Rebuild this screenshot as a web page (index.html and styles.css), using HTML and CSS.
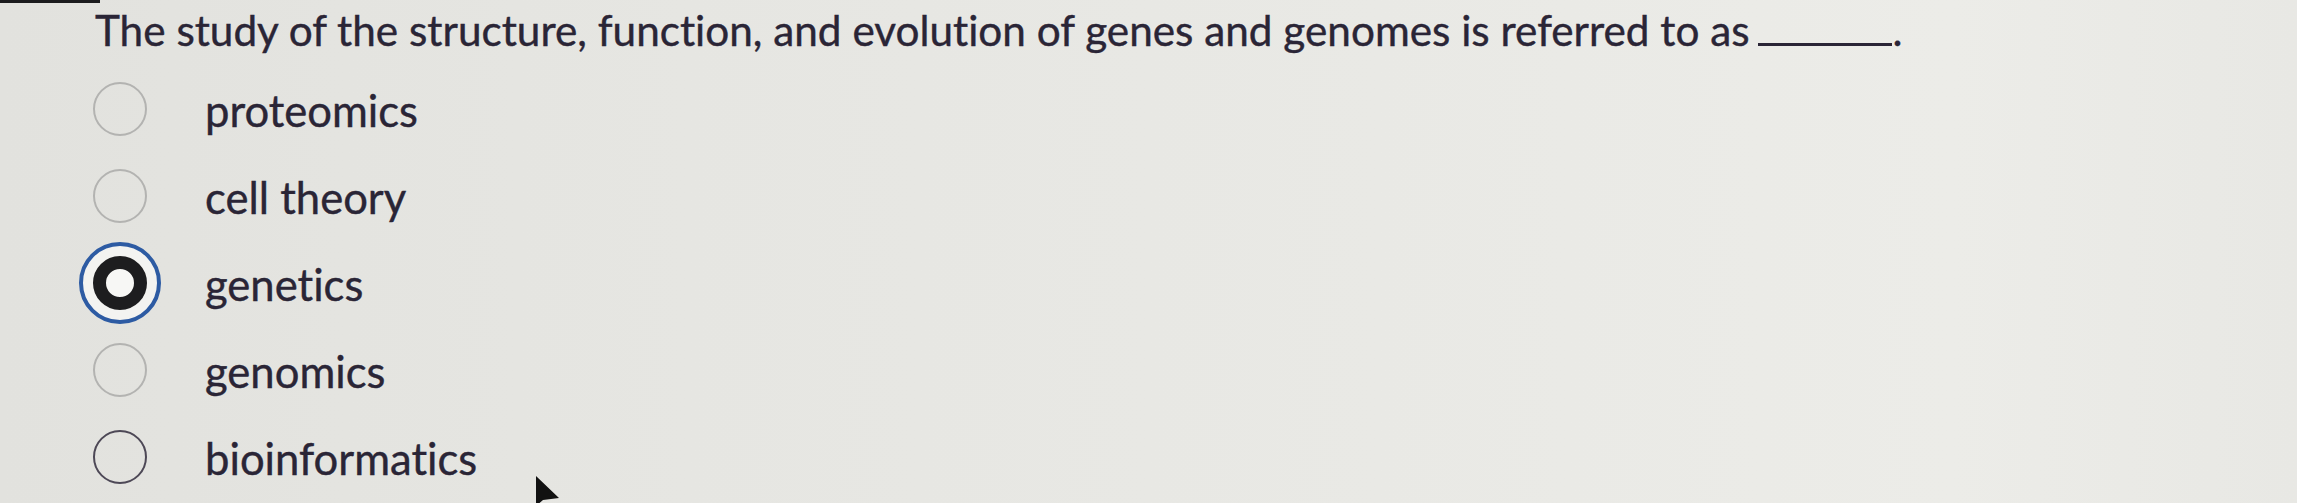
FILE: index.html
```html
<!DOCTYPE html>
<html lang="en">
<head>
<meta charset="utf-8">
<title>Question</title>
<link rel="stylesheet" href="styles.css">
</head>
<body>
<div class="page">
  <div class="topbar"></div>
  <div class="question">The study of the structure, function, and evolution of genes and genomes is referred to as <span class="blank"></span>.</div>
  <div class="options">
    <label class="option"><span class="slot"><span class="radio"></span></span><span class="label">proteomics</span></label>
    <label class="option"><span class="slot"><span class="radio"></span></span><span class="label">cell theory</span></label>
    <label class="option"><span class="slot"><span class="radio selected"><span class="dot"></span></span></span><span class="label">genetics</span></label>
    <label class="option"><span class="slot"><span class="radio"></span></span><span class="label">genomics</span></label>
    <label class="option"><span class="slot"><span class="radio hover"></span></span><span class="label">bioinformatics</span></label>
  </div>
  <svg class="cursor" width="40" height="30" viewBox="0 0 40 30"><path d="M1 0 L1 30 L8 24 L24 22 Z" fill="#111"/></svg>
</div>
</body>
</html>
```

FILE: styles.css
```css
html, body {
  margin: 0;
  padding: 0;
}
body {
  width: 2297px;
  height: 503px;
  overflow: hidden;
  background: linear-gradient(90deg, #e2e2de 0%, #e6e6e2 30%, #e9e9e5 60%, #ecece8 85%, #e8e8e4 100%);
  font-family: Lato, "Open Sans", sans-serif;
  font-variant-ligatures: none;
  color: #2a2536;
  -webkit-text-stroke: 0.4px #2a2536;
}
.page {
  position: relative;
  height: 503px;
}
.topbar {
  width: 100px;
  height: 3px;
  background: #1b1b1d;
}
.question {
  margin-top: 2px;
  padding-left: 95px;
  font-size: 42.3px;
  line-height: 49px;
  white-space: nowrap;
}
.blank {
  display: inline-block;
  width: 134px;
  height: 4px;
  border-bottom: 3px solid #2a2536;
  margin-left: -2px;
  vertical-align: baseline;
}
.options {
  display: flex;
  flex-direction: column;
  margin-top: 11px;
}
.option {
  display: flex;
  align-items: center;
  height: 87px;
}
.slot {
  width: 82px;
  margin-left: 79px;
  display: flex;
  justify-content: center;
  align-items: center;
}
.radio {
  box-sizing: border-box;
  width: 54px;
  height: 54px;
  border-radius: 50%;
  border: 2.5px solid #b3b3b1;
}
.radio.hover {
  border-color: #4d4856;
}
.radio.selected {
  width: 82px;
  height: 82px;
  border: 4px solid #2d5ba3;
  background: #f3f3f1;
  display: flex;
  align-items: center;
  justify-content: center;
}
.dot {
  box-sizing: border-box;
  width: 54px;
  height: 54px;
  border-radius: 50%;
  border: 13px solid #1d1d1f;
  background: #f7f7f5;
}
.label {
  margin-left: 44px;
  font-size: 43.6px;
  line-height: 49px;
  padding-top: 4px;
}
.cursor {
  position: absolute;
  left: 535px;
  top: 476px;
  -webkit-text-stroke: 0;
}
```
